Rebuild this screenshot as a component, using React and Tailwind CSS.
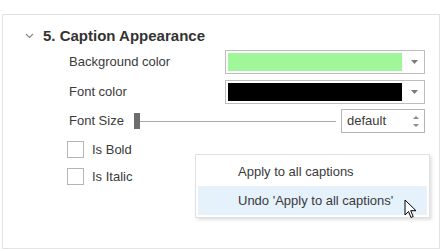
import React from "react";

function DropArrow() {
  return (
    <svg width="7" height="4" viewBox="0 0 7 4">
      <path d="M0 0h7L3.5 4z" fill="#7a7a7a" />
    </svg>
  );
}

function ColorPicker({ color }) {
  return (
    <div className="flex h-[24px] w-[200px] border border-[#bdbdbd] bg-white">
      <div className="m-[2px] flex-1" style={{ background: color }} />
      <div className="flex w-[20px] items-center justify-center">
        <DropArrow />
      </div>
    </div>
  );
}

function Checkbox({ label }) {
  return (
    <div className="flex h-[17px] items-center gap-[8px]">
      <div className="h-[17px] w-[17px] border border-[#b5b5b5] bg-white" />
      <span>{label}</span>
    </div>
  );
}

export default function App() {
  return (
    <div
      className="relative h-[251px] w-[442px] bg-white pl-[2px] pr-[2px] pt-[14px] text-[13px] text-[#3a3a3a]"
      style={{ fontFamily: '"Liberation Sans", Arial, sans-serif' }}
    >
      <div className="h-[235px] border border-[#e3e3e3] pl-[22px] pr-[14px]">
        {/* section header */}
        <div className="mt-[10px] flex h-[22px] items-center">
          <svg width="9" height="6" viewBox="0 0 9 6" className="mr-[9px]">
            <path d="M1 1l3.5 3.5L8 1" stroke="#8a8a8a" strokeWidth="1.2" fill="none" />
          </svg>
          <span className="text-[15px] font-bold text-[#333]">5. Caption Appearance</span>
        </div>

        <div className="ml-[44px]">
          <div className="mt-[3px] flex h-[24px] items-center justify-between">
            <span>Background color</span>
            <ColorPicker color="#a0f79a" />
          </div>
          <div className="mt-[6px] flex h-[24px] items-center justify-between">
            <span>Font color</span>
            <ColorPicker color="#000000" />
          </div>
          <div className="mt-[5px] flex h-[24px] items-center">
            <span className="w-[65px]">Font Size</span>
            <div className="relative mr-[5px] flex h-[16px] flex-1 items-center">
              <div className="h-[1px] flex-1 bg-[#a8a8a8]" />
              <div className="absolute left-0 h-[16px] w-[6px] bg-[#6d6d6d]" />
            </div>
            <div className="flex h-[24px] w-[84px] items-center border border-[#b5b5b5] bg-white pl-[5px]">
              <span className="flex-1">default</span>
              <div className="mr-[5px] flex flex-col items-center gap-[5px]">
                <svg width="6" height="3" viewBox="0 0 6 3"><path d="M0 3h6L3 0z" fill="#8a8a8a" /></svg>
                <svg width="6" height="3" viewBox="0 0 6 3"><path d="M0 0h6L3 3z" fill="#8a8a8a" /></svg>
              </div>
            </div>
          </div>
          <div className="-ml-[2px] mt-[8px] flex flex-col gap-[10px]">
            <Checkbox label="Is Bold" />
            <Checkbox label="Is Italic" />
          </div>
        </div>
      </div>

      {/* context menu */}
      <div className="absolute left-[195px] top-[154px] w-[235px] border border-[#e0e0e0] bg-white p-[2px] shadow-[2px_2px_3px_rgba(0,0,0,0.12)]">
        <div className="flex h-[29px] items-center pl-[40px]">Apply to all captions</div>
        <div className="flex h-[29px] items-center bg-[#e5f1fb] pl-[40px]">Undo 'Apply to all captions'</div>
      </div>

      {/* mouse cursor */}
      <svg className="absolute left-[404px] top-[199px]" width="13" height="20" viewBox="0 0 13 20">
        <path d="M1 1v15l3.5-3.5 2.5 6 2.2-1-2.5-5.8H12z" fill="#fff" stroke="#000" strokeWidth="1" strokeLinejoin="round" />
      </svg>
    </div>
  );
}
